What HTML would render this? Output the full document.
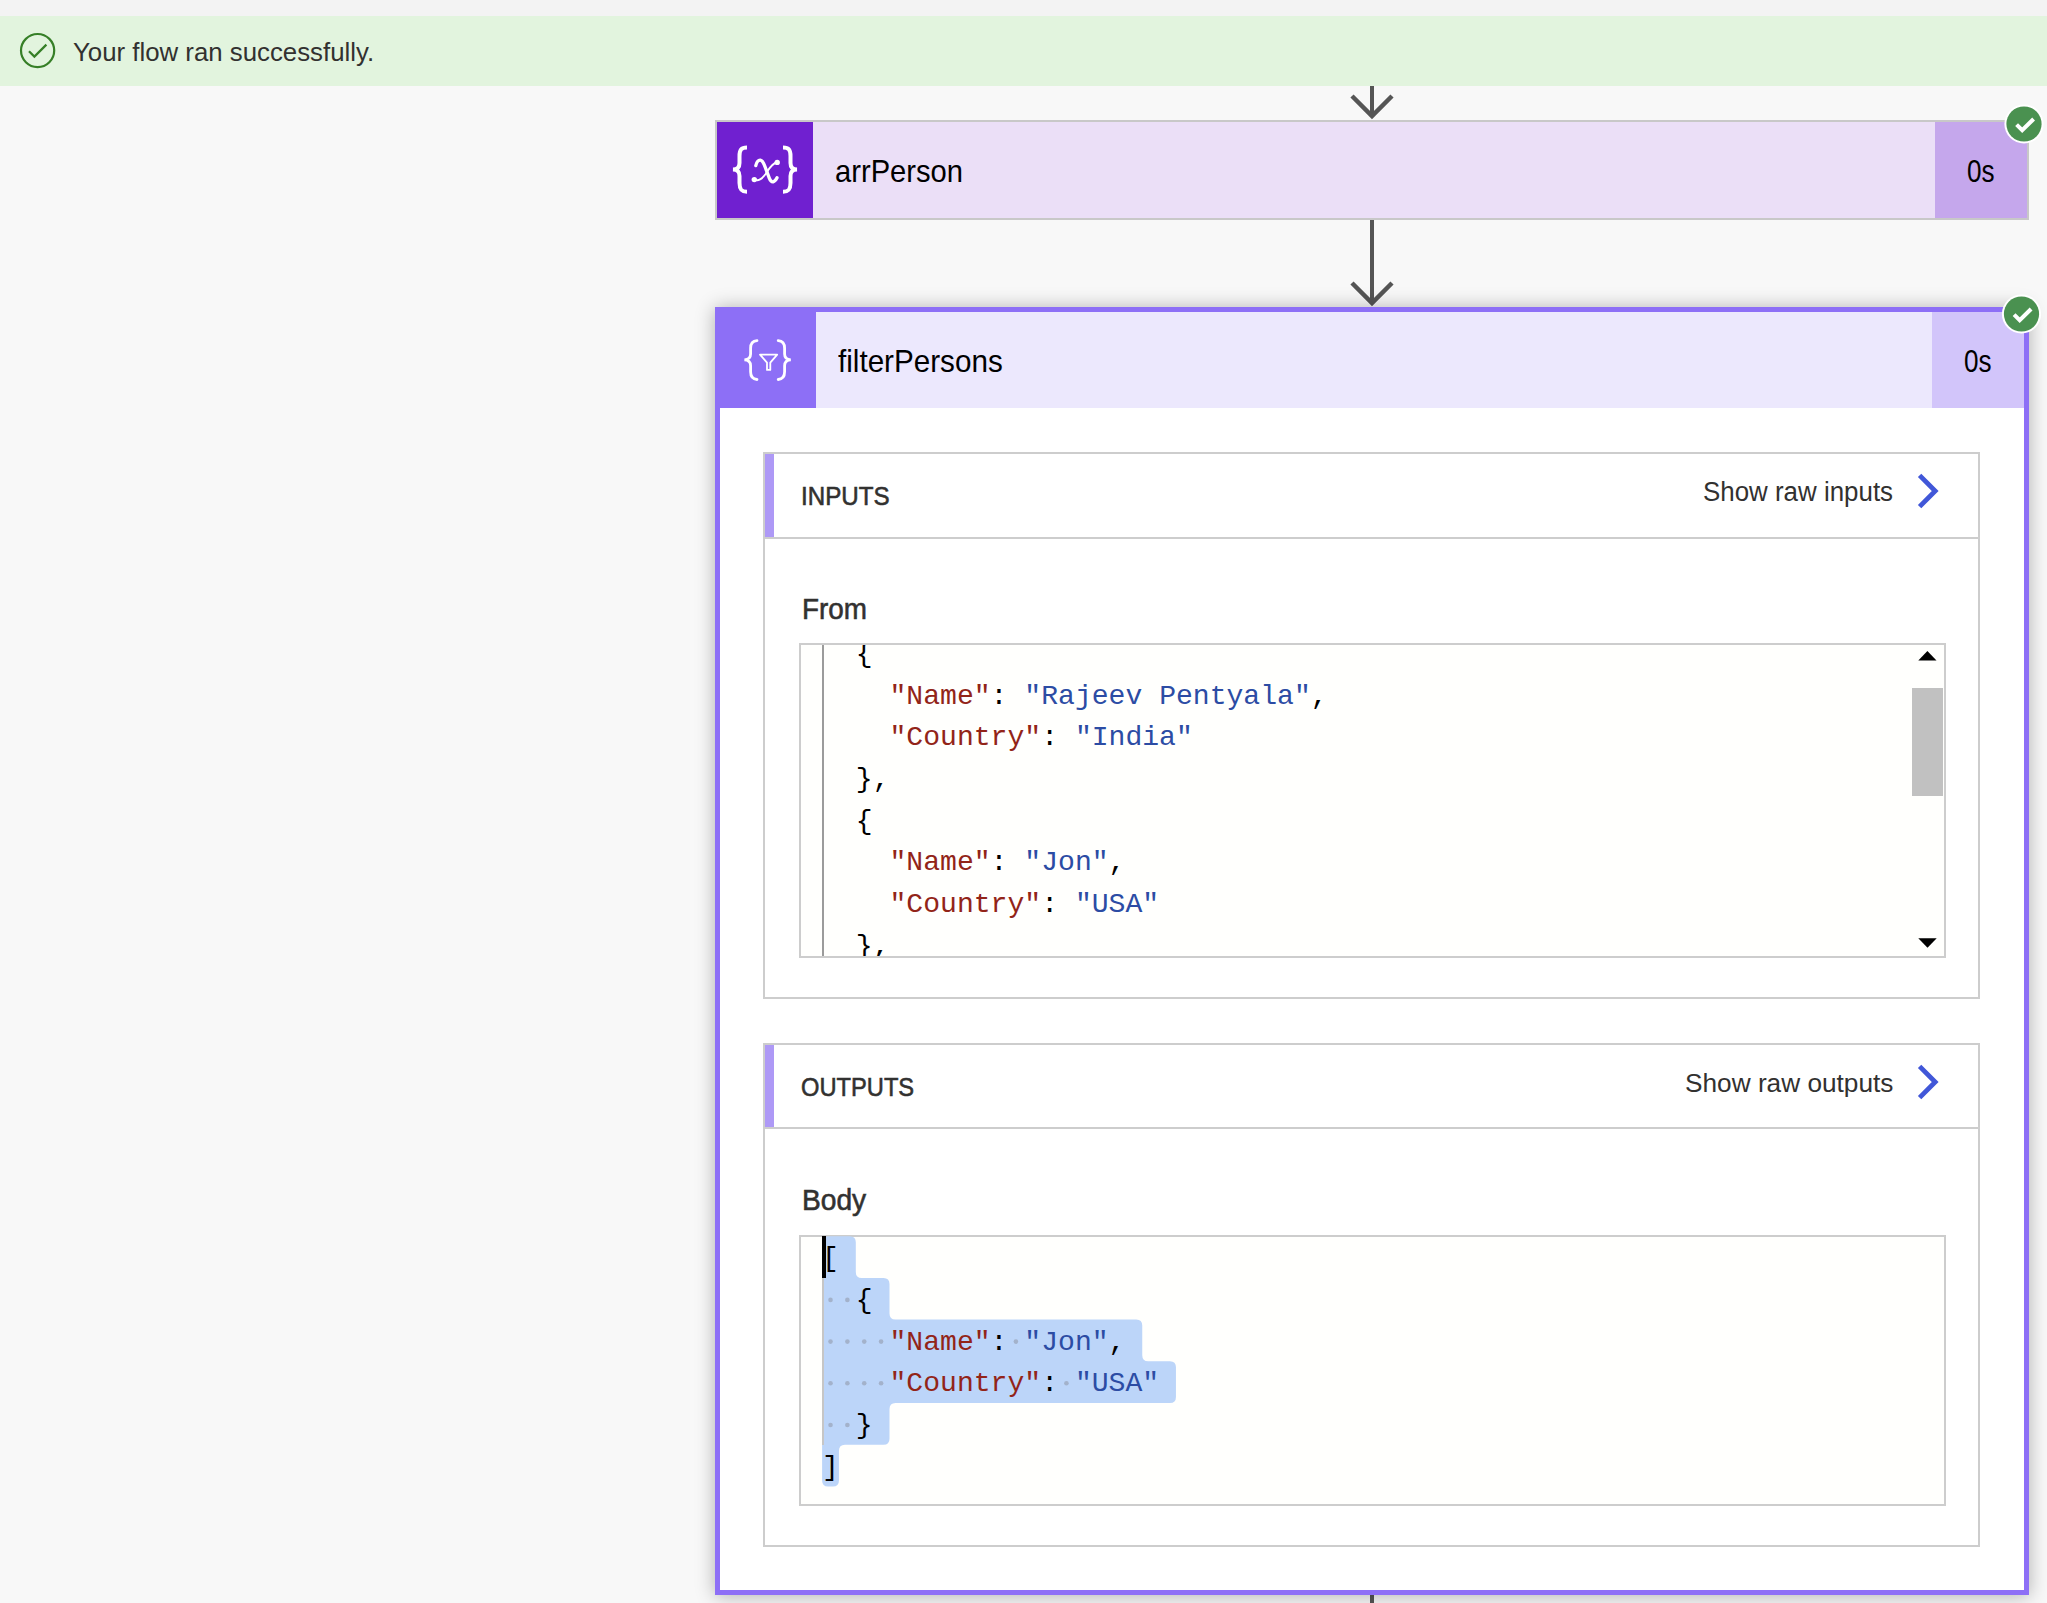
<!DOCTYPE html><html><head><meta charset="utf-8"><title>Flow run</title><style>

html,body{margin:0;padding:0}
body{width:2047px;height:1603px;overflow:hidden;position:relative;background:#f8f8f8;font-family:"Liberation Sans", sans-serif}
.a{position:absolute;box-sizing:border-box}
.t{position:absolute;white-space:pre;transform-origin:0 0;font-family:"Liberation Sans", sans-serif}
.c{position:absolute;white-space:pre;font-family:"Liberation Mono", monospace;font-size:28.08px;line-height:41.7px;height:41.7px}
svg{position:absolute;left:0;top:0;overflow:visible}

</style></head><body>
<div class="a" style="left:0;top:0;width:2047px;height:16px;background:#f3f3f3"></div>
<div class="a" style="left:0;top:16px;width:2047px;height:70px;background:#e2f4de"></div>
<svg width="2047" height="1603" style="z-index:0"><g stroke="#555555" fill="none"><line x1="1372" y1="86" x2="1372" y2="116" stroke-width="4"/><polyline points="1352,96 1372,116 1392,96" stroke-width="4.5" stroke-miterlimit="10"/><line x1="1372" y1="220" x2="1372" y2="303" stroke-width="4"/><polyline points="1352,283 1372,303 1392,283" stroke-width="4.5" stroke-miterlimit="10"/><line x1="1372" y1="1590" x2="1372" y2="1603" stroke-width="4"/></g></svg>
<svg width="80" height="90" style="left:0;top:0"><circle cx="37.6" cy="50.6" r="16.6" fill="none" stroke="#367f27" stroke-width="2.2"/><polyline points="29,51.2 34.4,56.6 46.4,44.6" fill="none" stroke="#367f27" stroke-width="2.2"/></svg>
<div class="a" style="left:715px;top:120px;width:1314px;height:100px;border:2px solid #c8c8c8;background:#ebdff7"></div>
<div class="a" style="left:717px;top:122px;width:96px;height:96px;background:#7020d0"></div>
<div class="a" style="left:1935px;top:122px;width:92px;height:96px;background:#c5a7ec"></div>
<svg width="2047" height="400" style="left:0;top:0"><g fill="none" stroke="#ffffff" stroke-width="4" stroke-linecap="butt"><path d="M747,147.5 C741,147.5 739.5,150 739.5,156 L739.5,163 C739.5,167.5 737.5,169.5 733,169.6 C737.5,169.8 739.5,171.5 739.5,176 L739.5,183 C739.5,189 741,191.8 747,191.8"/><path d="M783,147.5 C789,147.5 790.5,150 790.5,156 L790.5,163 C790.5,167.5 792.5,169.5 797,169.6 C792.5,169.8 790.5,171.5 790.5,176 L790.5,183 C790.5,189 789,191.8 783,191.8"/></g><g fill="none" stroke="#fff" stroke-linecap="round"><path d="M755.8,165.6 C756.8,161.6 758.4,160 760.4,160.2 C762.8,160.5 764.4,164.8 766.4,170.4 L769.4,178.4 C770.4,181 771.6,182 773.2,181.8 C775,181.4 776.2,179.4 777,177.8" stroke-width="3.3"/><path d="M754.6,179.6 C758.4,181.6 762.4,178.4 765.6,174 C768.6,169.6 771.6,163.4 777,162.2" stroke-width="1.9"/></g><circle cx="777.2" cy="162.4" r="2.7" fill="#fff"/><circle cx="754.3" cy="179.6" r="2.7" fill="#fff"/></svg>
<div class="a" style="left:715px;top:307px;width:1314px;height:1288px;border:5px solid #8d6ff6;background:#ffffff;box-shadow:0 1px 18px rgba(0,0,0,0.30)"></div>
<div class="a" style="left:720px;top:312px;width:96px;height:96px;background:#8d6ff6"></div>
<div class="a" style="left:816px;top:312px;width:1116px;height:96px;background:#ece8fd"></div>
<div class="a" style="left:1932px;top:312px;width:92px;height:96px;background:#d2c5fa"></div>
<svg width="2047" height="400" style="left:0;top:0"><g fill="none" stroke="#ffffff" stroke-width="2.8" stroke-linecap="round"><path d="M757,340.6 C752.6,340.9 750.6,343.6 750.6,348.2 L750.6,354 C750.6,357.6 748.6,359.6 744.4,359.8 C748.6,360 750.6,362.1 750.6,365.7 L750.6,371.8 C750.6,376.4 752.6,379.2 757,379.5"/><path d="M778.2,340.6 C782.6,340.9 784.6,343.6 784.6,348.2 L784.6,354 C784.6,357.6 786.6,359.6 790.8,359.8 C786.6,360 784.6,362.1 784.6,365.7 L784.6,371.8 C784.6,376.4 782.6,379.2 778.2,379.5"/></g><path d="M760,354.6 L777.2,354.6 L770.3,362.6 L770.3,369.9 L767,369.9 L767,362.6 Z" fill="none" stroke="#fff" stroke-width="1.8" stroke-linejoin="round"/></svg>
<svg width="2047" height="400" style="left:0;top:0"><circle cx="2024" cy="124" r="19.6" fill="#ffffff"/><circle cx="2024" cy="124" r="17.6" fill="#4a9150"/><polyline points="2016.6,124.6 2022.2,130.2 2033.6,119" fill="none" stroke="#fff" stroke-width="4"/></svg>
<svg width="2047" height="400" style="left:0;top:0"><circle cx="2021.5" cy="314" r="19.6" fill="#ffffff"/><circle cx="2021.5" cy="314" r="17.6" fill="#4a9150"/><polyline points="2014.1,314.6 2019.7,320.2 2031.1,309" fill="none" stroke="#fff" stroke-width="4"/></svg>
<div class="a" style="left:763px;top:452px;width:1217px;height:547px;border:2px solid #cdcdcd;background:#ffffff"></div>
<div class="a" style="left:765px;top:454px;width:1213px;height:85px;border-bottom:2px solid #cdcdcd;background:#ffffff"></div>
<div class="a" style="left:765px;top:454px;width:9px;height:83px;background:#ae99f6"></div>
<div class="a" style="left:799px;top:643px;width:1147px;height:315px;border:2px solid #cdcdcd;background:#fffffd;overflow:hidden"></div>
<div class="a" style="left:763px;top:1043px;width:1217px;height:504px;border:2px solid #cdcdcd;background:#ffffff"></div>
<div class="a" style="left:765px;top:1045px;width:1213px;height:84px;border-bottom:2px solid #cdcdcd;background:#ffffff"></div>
<div class="a" style="left:765px;top:1045px;width:9px;height:82px;background:#ae99f6"></div>
<div class="a" style="left:799px;top:1235px;width:1147px;height:271px;border:2px solid #cdcdcd;background:#fffffd;overflow:hidden"></div>
<svg width="2047" height="1603" style="left:0;top:0"><polyline points="1919.6,475.4 1935.2,491 1919.6,506.6" fill="none" stroke="#4157d8" stroke-width="4.8"/></svg>
<svg width="2047" height="1603" style="left:0;top:0"><polyline points="1919.6,1066.4 1935.2,1082 1919.6,1097.6" fill="none" stroke="#4157d8" stroke-width="4.8"/></svg>
<div class="a" style="left:801px;top:645px;width:1143px;height:311px;overflow:hidden">
<div style="position:absolute;left:-801px;top:-645px;width:2047px;height:1603px">
<div class="a" style="left:822px;top:645px;width:2px;height:311px;background:#9b9b9b"></div>
<div class="c" style="left:822.10px;top:633.88px">  <span style="color:#000000">{</span></div>
<div class="c" style="left:822.10px;top:675.58px">    <span style="color:#922418">"Name"</span><span style="color:#000000">:</span> <span style="color:#2c4ca4">"Rajeev Pentyala"</span><span style="color:#000000">,</span></div>
<div class="c" style="left:822.10px;top:717.28px">    <span style="color:#922418">"Country"</span><span style="color:#000000">:</span> <span style="color:#2c4ca4">"India"</span></div>
<div class="c" style="left:822.10px;top:758.98px">  <span style="color:#000000">}</span><span style="color:#000000">,</span></div>
<div class="c" style="left:822.10px;top:800.68px">  <span style="color:#000000">{</span></div>
<div class="c" style="left:822.10px;top:842.38px">    <span style="color:#922418">"Name"</span><span style="color:#000000">:</span> <span style="color:#2c4ca4">"Jon"</span><span style="color:#000000">,</span></div>
<div class="c" style="left:822.10px;top:884.08px">    <span style="color:#922418">"Country"</span><span style="color:#000000">:</span> <span style="color:#2c4ca4">"USA"</span></div>
<div class="c" style="left:822.10px;top:925.78px">  <span style="color:#000000">}</span><span style="color:#000000">,</span></div>
<div class="c" style="left:822.10px;top:967.48px">  <span style="color:#000000">{</span></div>
</div></div>
<svg width="2047" height="1603" style="left:0;top:0"><polygon points="1918.3,660.5 1936.5,660.5 1927.4,651" fill="#000"/><rect x="1912" y="688" width="31" height="108" fill="#c1c1c1"/><polygon points="1918.3,938.2 1936.7,938.2 1927.5,947.7" fill="#000"/></svg>
<svg width="2047" height="1603" style="left:0;top:0"><path d="M822.10,1242.20 Q822.10,1236.20 828.10,1236.20 L849.80,1236.20 Q855.80,1236.20 855.80,1242.20 L855.80,1271.90 Q855.80,1277.90 861.80,1277.90 L883.50,1277.90 Q889.50,1277.90 889.50,1283.90 L889.50,1313.60 Q889.50,1319.60 895.50,1319.60 L1136.25,1319.60 Q1142.25,1319.60 1142.25,1325.60 L1142.25,1355.30 Q1142.25,1361.30 1148.25,1361.30 L1169.95,1361.30 Q1175.95,1361.30 1175.95,1367.30 L1175.95,1397.00 Q1175.95,1403.00 1169.95,1403.00 L895.50,1403.00 Q889.50,1403.00 889.50,1409.00 L889.50,1438.70 Q889.50,1444.70 883.50,1444.70 L844.95,1444.70 Q838.95,1444.70 838.95,1450.70 L838.95,1480.40 Q838.95,1486.40 832.95,1486.40 L828.10,1486.40 Q822.10,1486.40 822.10,1480.40 Z" fill="#bcd5f9"/>
<circle cx="830.52" cy="1299.90" r="2.3" fill="#a3b2cb"/>
<circle cx="847.38" cy="1299.90" r="2.3" fill="#a3b2cb"/>
<circle cx="830.52" cy="1341.60" r="2.3" fill="#a3b2cb"/>
<circle cx="847.38" cy="1341.60" r="2.3" fill="#a3b2cb"/>
<circle cx="864.23" cy="1341.60" r="2.3" fill="#a3b2cb"/>
<circle cx="881.08" cy="1341.60" r="2.3" fill="#a3b2cb"/>
<circle cx="1015.88" cy="1341.60" r="2.3" fill="#a3b2cb"/>
<circle cx="830.52" cy="1383.30" r="2.3" fill="#a3b2cb"/>
<circle cx="847.38" cy="1383.30" r="2.3" fill="#a3b2cb"/>
<circle cx="864.23" cy="1383.30" r="2.3" fill="#a3b2cb"/>
<circle cx="881.08" cy="1383.30" r="2.3" fill="#a3b2cb"/>
<circle cx="1066.42" cy="1383.30" r="2.3" fill="#a3b2cb"/>
<circle cx="830.52" cy="1425.00" r="2.3" fill="#a3b2cb"/>
<circle cx="847.38" cy="1425.00" r="2.3" fill="#a3b2cb"/>
</svg>
<div class="a" style="left:822px;top:1278px;width:2px;height:167px;background:#c6c6c6"></div>
<div class="c" style="left:822.10px;top:1238.18px"><span style="color:#000000">[</span></div>
<div class="c" style="left:822.10px;top:1279.88px">  <span style="color:#000000">{</span></div>
<div class="c" style="left:822.10px;top:1321.58px">    <span style="color:#922418">"Name"</span><span style="color:#000000">:</span> <span style="color:#2c4ca4">"Jon"</span><span style="color:#000000">,</span></div>
<div class="c" style="left:822.10px;top:1363.28px">    <span style="color:#922418">"Country"</span><span style="color:#000000">:</span> <span style="color:#2c4ca4">"USA"</span></div>
<div class="c" style="left:822.10px;top:1404.98px">  <span style="color:#000000">}</span></div>
<div class="c" style="left:822.10px;top:1446.68px"><span style="color:#000000">]</span></div>
<div class="a" style="left:822px;top:1236px;width:4.4px;height:42px;background:#000"></div>
<div class="t" id="banner" style="left:73.30px;top:38.99px;font-size:26px;line-height:26px;color:#323130;font-weight:400;transform:scaleX(0.9924);">Your flow ran successfully.</div>
<div class="t" id="arr" style="left:835.05px;top:155.78px;font-size:30.5px;line-height:30.5px;color:#000000;font-weight:400;transform:scaleX(0.9560);">arrPerson</div>
<div class="t" id="os1" style="left:1967.11px;top:155.88px;font-size:30.5px;line-height:30.5px;color:#000000;font-weight:400;transform:scaleX(0.8557);">0s</div>
<div class="t" id="filt" style="left:838.20px;top:346.08px;font-size:30.5px;line-height:30.5px;color:#000000;font-weight:400;transform:scaleX(0.9717);">filterPersons</div>
<div class="t" id="os2" style="left:1964.36px;top:345.88px;font-size:30.5px;line-height:30.5px;color:#000000;font-weight:400;transform:scaleX(0.8557);">0s</div>
<div class="t" id="inputs" style="left:801.38px;top:483.46px;font-size:26.5px;line-height:26.5px;color:#323130;font-weight:400;transform:scaleX(0.9107);-webkit-text-stroke:0.6px #323130;">INPUTS</div>
<div class="t" id="rawin" style="left:1703.04px;top:478.94px;font-size:27px;line-height:27px;color:#323130;font-weight:400;transform:scaleX(0.9594);">Show raw inputs</div>
<div class="t" id="from" style="left:801.75px;top:593.16px;font-size:30.4px;line-height:30.4px;color:#323130;font-weight:400;transform:scaleX(0.9164);-webkit-text-stroke:0.6px #323130;">From</div>
<div class="t" id="outputs" style="left:800.90px;top:1074.36px;font-size:26.5px;line-height:26.5px;color:#323130;font-weight:400;transform:scaleX(0.8937);-webkit-text-stroke:0.6px #323130;">OUTPUTS</div>
<div class="t" id="rawout" style="left:1685.21px;top:1069.76px;font-size:26.5px;line-height:26.5px;color:#323130;font-weight:400;transform:scaleX(0.9895);">Show raw outputs</div>
<div class="t" id="body" style="left:801.74px;top:1185.04px;font-size:30.3px;line-height:30.3px;color:#323130;font-weight:400;transform:scaleX(0.9296);-webkit-text-stroke:0.6px #323130;">Body</div>
</body></html>
